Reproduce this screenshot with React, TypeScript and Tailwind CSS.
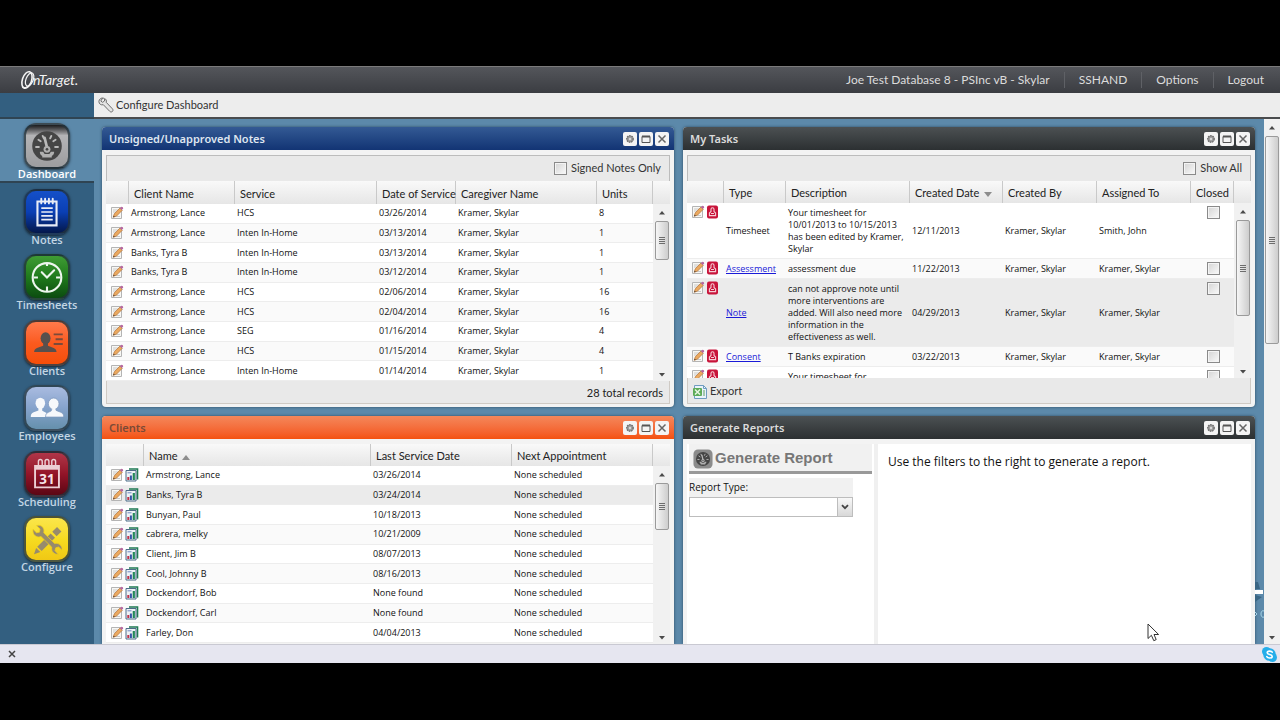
import { useState } from 'react';
import type { ReactNode } from 'react';
import clsx from 'clsx';

interface Note {
  client: string;
  service: string;
  date: string;
  units: number;
}

interface Task {
  type: string;
  linked: boolean;
  description: string;
  created: string;
  createdBy: string;
  assignedTo: string;
  height: string;
  active?: boolean;
}

interface Client {
  name: string;
  lastService: string;
}

const notes: Note[] = [
  { client: 'Armstrong, Lance', service: 'HCS', date: '03/26/2014', units: 8 },
  { client: 'Armstrong, Lance', service: 'Inten In-Home', date: '03/13/2014', units: 1 },
  { client: 'Banks, Tyra B', service: 'Inten In-Home', date: '03/13/2014', units: 1 },
  { client: 'Banks, Tyra B', service: 'Inten In-Home', date: '03/12/2014', units: 1 },
  { client: 'Armstrong, Lance', service: 'HCS', date: '02/06/2014', units: 16 },
  { client: 'Armstrong, Lance', service: 'HCS', date: '02/04/2014', units: 16 },
  { client: 'Armstrong, Lance', service: 'SEG', date: '01/16/2014', units: 4 },
  { client: 'Armstrong, Lance', service: 'HCS', date: '01/15/2014', units: 4 },
  { client: 'Armstrong, Lance', service: 'Inten In-Home', date: '01/14/2014', units: 1 },
];

const tasks: Task[] = [
  {
    type: 'Timesheet',
    linked: false,
    description: 'Your timesheet for 10/01/2013 to 10/15/2013 has been edited by Kramer, Skylar',
    created: '12/11/2013',
    createdBy: 'Kramer, Skylar',
    assignedTo: 'Smith, John',
    height: 'h-14',
  },
  {
    type: 'Assessment',
    linked: true,
    description: 'assessment due',
    created: '11/22/2013',
    createdBy: 'Kramer, Skylar',
    assignedTo: 'Kramer, Skylar',
    height: 'h-5',
  },
  {
    type: 'Note',
    linked: true,
    description:
      'can not approve note until more interventions are added. Will also need more information in the effectiveness as well.',
    created: '04/29/2013',
    createdBy: 'Kramer, Skylar',
    assignedTo: 'Kramer, Skylar',
    height: 'h-17',
    active: true,
  },
  {
    type: 'Consent',
    linked: true,
    description: 'T Banks expiration',
    created: '03/22/2013',
    createdBy: 'Kramer, Skylar',
    assignedTo: 'Kramer, Skylar',
    height: 'h-5',
  },
];

const clients: Client[] = [
  { name: 'Armstrong, Lance', lastService: '03/26/2014' },
  { name: 'Banks, Tyra B', lastService: '03/24/2014' },
  { name: 'Bunyan, Paul', lastService: '10/18/2013' },
  { name: 'cabrera, melky', lastService: '10/21/2009' },
  { name: 'Client, Jim B', lastService: '08/07/2013' },
  { name: 'Cool, Johnny B', lastService: '08/16/2013' },
  { name: 'Dockendorf, Bob', lastService: 'None found' },
  { name: 'Dockendorf, Carl', lastService: 'None found' },
  { name: 'Farley, Don', lastService: '04/04/2013' },
];

/* ---------- icons ---------- */

function Logo() {
  return (
    <svg width="64" height="22" viewBox="0 0 64 22" role="img" aria-label="OnTarget">
      <g fill="none" stroke="#f4f4f4">
        <ellipse cx="7" cy="11" rx="4.6" ry="8.6" transform="rotate(18 7 11)" strokeWidth="1.6" />
        <ellipse cx="9.6" cy="10.5" rx="3.6" ry="7" transform="rotate(22 9.6 10.5)" strokeWidth="1.2" />
        <path d="M2 17.5c2.4 2 6 1 8.4-3" strokeWidth="1.2" />
      </g>
      <text
        x="13"
        y="16"
        fill="#f4f4f4"
        className="font-['Lato',sans-serif] text-[14px] italic"
      >
        nTarget.
      </text>
    </svg>
  );
}

function WrenchIcon() {
  return (
    <svg width="16" height="16" viewBox="0 0 16 16" aria-hidden="true">
      <path
        d="M5.6 1.2C3.4.4 1 2 .9 4.4c-.1 2.6 2.2 4 4.4 3.3l6.4 6.6c.7.8 1.9.9 2.7.2.8-.8.7-1.9 0-2.7L8.2 5.3C8.8 3.6 8 2 6.600 1.500L6.500 4 4.600 5.300 3 4.200 3.100 2.500z"
        fill="#e4e4e4"
        stroke="#6d6d6d"
        strokeWidth="1"
        strokeLinejoin="round"
      />
    </svg>
  );
}

function EditIcon() {
  return (
    <svg width="14" height="14" viewBox="0 0 14 14" aria-hidden="true">
      <path d="M1.500 1.500h10v11h-10z" fill="#f7f7f4" stroke="#b4b4b4" />
      <path d="M3 4h5M3 6h3M3 10.500h7" stroke="#c9c9c9" />
      <path d="M3.200 11.300 4.300 7.800 10 2l2.300 2.200-5.800 5.900z" fill="#eba95f" stroke="#b87a42" strokeWidth=".8" />
      <path d="m9.800 2.200 1.400-1.300c.9-.5 2.300.8 1.900 1.700l-1.200 1.400z" fill="#b768a0" />
      <path d="m3.200 11.300.5-1.600 1.100 1.100z" fill="#333" />
    </svg>
  );
}

function ChartIcon() {
  return (
    <svg width="14" height="14" viewBox="0 0 14 14" aria-hidden="true">
      <path d="M4 1h8.500v10.500" fill="none" stroke="#1f7a54" strokeWidth="1.600" />
      <path d="M1 2.500h10v10.500H1z" fill="#eef3f6" stroke="#4d6c88" />
      <path d="M2.500 4.800h4" stroke="#7088c4" />
      <path d="M3.300 12V9" stroke="#c0324a" strokeWidth="2" />
      <path d="M5.900 12V7.500" stroke="#3554a8" strokeWidth="2" />
      <path d="M8.800 12V5" stroke="#23885a" strokeWidth="2.200" />
    </svg>
  );
}

function LockIcon() {
  return (
    <svg width="13" height="14" viewBox="0 0 13 14" aria-hidden="true">
      <rect x="1" y=".5" width="11" height="13" rx="2" fill="#c8143a" />
      <path d="M5 6.500V4.300c0-2 3-2 3 0v2.200l1.600 1.500v2.600H3.400V8z" fill="none" stroke="#f6cdd5" strokeWidth="1.100" />
      <path d="M5 8.500h3" stroke="#f6cdd5" />
    </svg>
  );
}

function ExcelIcon() {
  return (
    <svg width="16" height="16" viewBox="0 0 16 16" aria-hidden="true">
      <path d="M2.500 1.500h9l3 3v10h-12z" fill="#e9f3fb" stroke="#6f9cc0" />
      <path d="M11.500 1.500v3h3" fill="none" stroke="#6f9cc0" />
      <rect x="1" y="4" width="9" height="8" rx="1" fill="#5dab58" />
      <path d="m3 5.500 5 5m0-5-5 5" stroke="#e9f7e4" strokeWidth="1.500" />
      <path d="M11 7h2M11 9h2M11 11h2" stroke="#5f9e62" />
    </svg>
  );
}

function Gauge() {
  return (
    <>
      <circle cx="22" cy="22" r="15.500" fill="#454545" />
      <g stroke="#b9b9b9" strokeWidth="2" strokeLinecap="round">
        <path d="M10.500 23h3M30.500 23h3M13 15.500l2.400 1.600M31 15.500l-2.400 1.600M17.500 11.500l1.200 2.500M26.500 11.500l-1.200 2.500" />
        <path d="m19.500 13.500 2.500 10" strokeWidth="2.800" />
      </g>
      <circle cx="22" cy="25.500" r="3.600" fill="#b0b0b0" />
      <path d="M14.500 28h3.500l1.500 2.500h5l1.500-2.500h3.500c0 2.300-1 3.600-2.500 4.600V34H17v-1.400c-1.500-1-2.500-2.300-2.500-4.600z" fill="#b0b0b0" />
      <circle cx="22" cy="25.500" r="1.400" fill="#454545" />
    </>
  );
}

function NotesGlyph() {
  return (
    <g fill="none" stroke="#e8ecf6">
      <path d="M12 11h20v25H12z" strokeWidth="2.200" />
      <path d="M16 8v5M20 8v5M24 8v5M28 8v5" strokeWidth="2" strokeLinecap="round" />
      <path d="M16 18h12M16 22h12M16 26h12M16 30h12" strokeWidth="1.800" />
    </g>
  );
}

function ClockGlyph() {
  return (
    <g fill="none" stroke="#eef6ee" strokeWidth="2.200">
      <circle cx="22" cy="22.500" r="15" />
      <path d="m16.500 17 5.500 5.500 7.500-7.500" strokeLinecap="round" />
      <path d="M22 32v5M8 22.500h4.500M31.500 22.500H36M22 8v2.500" />
    </g>
  );
}

function ClientGlyph() {
  return (
    <>
      <ellipse cx="20.500" cy="17" rx="5.200" ry="6.200" fill="#57504d" />
      <path d="M18 21h5v4l6 2.200c1.800.8 3 2 3 4.300H8.500c0-2.300 1.200-3.500 3-4.300L18 25z" fill="#57504d" />
      <path d="M29 13h9.500M31 18h7.500M29 23h9.500" stroke="#7b4a3a" strokeWidth="2" />
    </>
  );
}

function PeopleGlyph() {
  return (
    <g fill="#f6f8fb">
      <ellipse cx="15" cy="17" rx="5" ry="5.800" />
      <path d="M13 21h4v4l5 2.500v4H5c0-3 .8-4 3-5l5-2z" />
      <g stroke="#7d97bd" strokeWidth=".8">
        <path d="M26.500 20h5v4.500l5 2c2.200 1 3 2 3 5h-19c0-3 .8-4 3-5l3-1.500z" />
        <ellipse cx="29" cy="17.500" rx="5.600" ry="6" />
      </g>
      <path d="M27.500 22h3v3h-3z" />
    </g>
  );
}

function CalendarGlyph() {
  return (
    <>
      <g fill="none" stroke="#eccfd4">
        <path d="M9.500 13.500h25v22.500h-25z" strokeWidth="2" />
        <path d="M9.500 15.500h25" strokeWidth="4" />
        <path d="M13 14V9c0-3 4-3 4 0v4M20 14V9c0-3 4-3 4 0v4M27 14V9c0-3 4-3 4 0v4" strokeWidth="1.500" />
      </g>
      <text x="22" y="32" textAnchor="middle" fill="#f6e4e7" className="font-['Noto_Sans',sans-serif] text-[14px] font-bold">
        31
      </text>
    </>
  );
}

function ToolsGlyph() {
  return (
    <g fill="#978b6c">
      <path d="m27.500 14.500 5-5 4.600 4.600-5 5zM25.800 16.200l4.600 4.600-14 13.800-4.600-4.600zM10.600 31.300l4.400 4.400-6.600 2.200z" />
      <path
        d="M16.500 8.600c-1.800-1-3.600-1.200-5.400-.6l3.600 3.600-.6 3.200-3.200.7-3.500-3.600c-.7 4 1.600 7.700 5.400 8 1.200.1 2-.1 2.900-.5L27 30.600c-1 4.500 2.500 8 7 7.300l-3.600-3.700.8-3 3-.8 3.500 3.500c.8-4.500-3-8.200-7.700-7.200L18.600 15.500c.7-2.600 0-5-2.100-6.900z"
        stroke="#f2cf18"
        strokeWidth=".8"
      />
    </g>
  );
}

/* ---------- sidebar ---------- */

const navItems: { label: string; tile: string; glyph: ReactNode }[] = [
  { label: 'Dashboard', tile: 'bg-linear-to-b from-[#1c1c1e] via-[#b4b4b6] via-25% to-[#9d9d9f]', glyph: <Gauge /> },
  { label: 'Notes', tile: 'bg-linear-to-b from-[#1550c8] via-[#0a3fb4] to-[#04184c]', glyph: <NotesGlyph /> },
  { label: 'Timesheets', tile: 'bg-linear-to-b from-[#3f9c34] via-[#1f7a1c] to-[#0c4c10]', glyph: <ClockGlyph /> },
  { label: 'Clients', tile: 'bg-linear-to-b from-[#ff7a4a] via-[#fb5a1e] to-[#f64e08]', glyph: <ClientGlyph /> },
  { label: 'Employees', tile: 'bg-linear-to-b from-[#a9bbe0] via-[#86a3cc] to-[#6590ac]', glyph: <PeopleGlyph /> },
  { label: 'Scheduling', tile: 'bg-linear-to-b from-[#b03548] via-[#931428] to-[#5c0714]', glyph: <CalendarGlyph /> },
  { label: 'Configure', tile: 'bg-linear-to-b from-[#fbe64a] via-[#f6dc20] to-[#f0c814]', glyph: <ToolsGlyph /> },
];

function Sidebar() {
  const [current, setCurrent] = useState('Dashboard');

  return (
    <nav className="w-[94px] shrink-0 bg-[#335f80]">
      <div className="h-[26px] border-b-2 border-[#2f4453]" />
      <ul className="grid h-[459px] grid-rows-7">
        {navItems.map((item) => (
          <li key={item.label}>
            <button
              type="button"
              onClick={() => setCurrent(item.label)}
              className={clsx(
                'flex w-full flex-col items-center pt-1',
                item.label === current && 'border-b-2 border-[#2f4453] bg-[#5c89aa] pb-0.5'
              )}
            >
              <span className={clsx('rounded-xl border-2 border-[#23343f]/80 shadow-sm shadow-black/50', item.tile)}>
                <svg width="42" height="42" viewBox="0 0 44 44" aria-hidden="true">
                  {item.glyph}
                </svg>
              </span>
              <span
                className={clsx(
                  "font-['Open_Sans',sans-serif] text-[11px] leading-[10px] font-semibold",
                  item.label === current ? 'text-white' : 'text-[#c3d6e4]'
                )}
              >
                {item.label}
              </span>
            </button>
          </li>
        ))}
      </ul>
    </nav>
  );
}

/* ---------- shared pieces ---------- */

function Checkbox({ id, label }: { id?: string; label?: string }) {
  return (
    <input
      id={id}
      type="checkbox"
      aria-label={label}
      className="size-[13px] shrink-0 appearance-none border border-[#8a8a8a] bg-linear-to-br from-[#d4d4d4] to-[#fafafa] shadow-[inset_0_0_0_1px_#f4f4f4] checked:bg-[#777]"
    />
  );
}

function ScrollBar({ thumb }: { thumb: string }) {
  return (
    <div className="flex min-h-0 flex-1 flex-col items-center bg-[#f1f1f1]" aria-hidden="true">
      <svg width="16" height="17" viewBox="0 0 16 17" className="shrink-0">
        <path d="M5 10.500 8 7l3 3.500z" fill="#4a4a4a" />
      </svg>
      <div
        className={clsx(
          'flex w-[14px] shrink-0 flex-col items-center justify-center gap-px rounded-xs border border-[#9a9a9a] bg-linear-to-r from-[#f6f6f6] to-[#cdcdcd]',
          thumb
        )}
      >
        <span className="h-px w-1.5 bg-[#6d6d6d]" />
        <span className="h-px w-1.5 bg-[#6d6d6d]" />
        <span className="h-px w-1.5 bg-[#6d6d6d]" />
        <span className="h-px w-1.5 bg-[#6d6d6d]" />
      </div>
      <div className="flex-1" />
      <svg width="16" height="14" viewBox="0 0 16 14" className="shrink-0">
        <path d="m5 6 3 3.500L11 6z" fill="#4a4a4a" />
      </svg>
    </div>
  );
}

const toolClass = 'flex size-[14px] items-center justify-center rounded-xs bg-[#f4f4f4]';

function PanelTools({ title }: { title: string }) {
  return (
    <div className="flex gap-0.5">
      <button type="button" className={toolClass} aria-label={`${title} settings`}>
        <svg width="10" height="10" viewBox="0 0 10 10">
          <circle cx="5" cy="5" r="3.200" fill="#9c9c9c" stroke="#6f6f6f" strokeWidth="1.400" strokeDasharray="1.600 .7" />
          <circle cx="5" cy="5" r="1.200" fill="#d8d8d8" />
        </svg>
      </button>
      <button type="button" className={toolClass} aria-label={`Maximize ${title}`}>
        <svg width="10" height="10" viewBox="0 0 10 10">
          <path d="M1 2.500h8v6H1z" fill="none" stroke="#555" />
          <path d="M1 2.500h8" stroke="#555" strokeWidth="2" />
        </svg>
      </button>
      <button type="button" className={toolClass} aria-label={`Close ${title}`}>
        <svg width="10" height="10" viewBox="0 0 10 10">
          <path d="m1.500 1.500 7 7m0-7-7 7" stroke="#666" strokeWidth="1.500" />
        </svg>
      </button>
    </div>
  );
}

interface PanelProps {
  title: string;
  headerClass: string;
  cut?: boolean;
  children: ReactNode;
}

function Panel({ title, headerClass, cut, children }: PanelProps) {
  return (
    <section
      className={clsx(
        'flex min-h-0 min-w-0 flex-col overflow-hidden rounded-t-sm bg-[#f3f3f3] shadow-[0_0_3px_#2c4a60]',
        !cut && 'rounded-b-sm'
      )}
    >
      <header className={clsx('flex h-[23px] shrink-0 items-center justify-between pt-px pr-[5px] pl-[7px]', headerClass)}>
        <h2 className="font-['Noto_Sans',sans-serif] text-[11px] font-semibold">{title}</h2>
        <PanelTools title={title} />
      </header>
      <div className={clsx('flex min-h-0 flex-1 flex-col px-1 pt-[5px]', !cut && 'pb-[3px]')}>{children}</div>
    </section>
  );
}

const barClass = 'flex shrink-0 items-center bg-[#e9e9e9] text-[#333]';
const thClass =
  'border-r border-[#c9c9c9] bg-linear-to-b from-[#f9f9f9] to-[#e6e6e6] pt-0.5 pl-[5px] text-left text-[11px] leading-4 font-normal text-[#222] whitespace-nowrap';
const tdClass = 'border-b border-[#ededed] pl-[2px] whitespace-nowrap';
const bodyClass = "font-['Open_Sans',sans-serif] text-[9px] leading-3 text-[#111]";

function ScrollColumn({ head, thumb }: { head: string; thumb: string }) {
  return (
    <div className="flex w-[17px] shrink-0 flex-col">
      <div className={clsx('shrink-0 bg-linear-to-b from-[#f9f9f9] to-[#e6e6e6]', head)} />
      <ScrollBar thumb={thumb} />
    </div>
  );
}

function SortArrow({ down }: { down?: boolean }) {
  return (
    <svg width="8" height="5" viewBox="0 0 8 5" className="ml-0.5 inline-block align-middle" aria-hidden="true">
      <path d={down ? 'M0 0h8L4 5z' : 'M0 5h8L4 0z'} fill="#8d8d8d" />
    </svg>
  );
}

/* ---------- panels ---------- */

function NotesPanel() {
  return (
    <Panel title="Unsigned/Unapproved Notes" headerClass="bg-linear-to-b from-[#345a94] to-[#123474] text-[#dfe6f0]">
      <div className={clsx(barClass, 'h-[26px] justify-end gap-1 border border-b-0 border-[#bcbcbc] pr-2')}>
        <Checkbox id="signed-only" />
        <label htmlFor="signed-only" className="text-[11px]">
          Signed Notes Only
        </label>
      </div>
      <div className="flex min-h-0 flex-1 overflow-hidden">
        <div className="min-w-0 flex-1">
          <table className="h-[200px] w-full table-fixed border-separate border-spacing-0 bg-white">
            <colgroup>
              <col className="w-[23px]" />
              <col className="w-[106px]" />
              <col className="w-[142px]" />
              <col className="w-[79px]" />
              <col className="w-[141px]" />
              <col className="w-[56px]" />
            </colgroup>
            <thead>
              <tr className="h-[23px]">
                <th className={thClass} aria-label="Edit" />
                <th className={thClass}>Client Name</th>
                <th className={thClass}>Service</th>
                <th className={thClass}>Date of Service</th>
                <th className={thClass}>Caregiver Name</th>
                <th className={thClass}>Units</th>
              </tr>
            </thead>
            <tbody className={bodyClass}>
              {notes.map((note, index) => (
                <tr key={index} className="even:bg-[#fafafa]">
                  <td className={tdClass}>
                    <button type="button" className="ml-0.5 block" aria-label={`Edit note for ${note.client}`}>
                      <EditIcon />
                    </button>
                  </td>
                  <td className={tdClass}>{note.client}</td>
                  <td className={tdClass}>{note.service}</td>
                  <td className={tdClass}>{note.date}</td>
                  <td className={tdClass}>Kramer, Skylar</td>
                  <td className={tdClass}>{note.units}</td>
                </tr>
              ))}
            </tbody>
          </table>
        </div>
        <ScrollColumn head="h-[23px]" thumb="h-[39px]" />
      </div>
      <div className={clsx(barClass, 'h-[23px] justify-end border border-t-0 border-[#cfcac4] pt-0.5 pr-1.5')}>
        <span className="text-[11px] text-[#222]">28 total records</span>
      </div>
    </Panel>
  );
}

function TasksPanel() {
  return (
    <Panel title="My Tasks" headerClass="bg-linear-to-b from-[#4c5153] to-[#2c3032] text-[#dcdcdc]">
      <div className={clsx(barClass, 'h-[26px] justify-end gap-1 border border-b-0 border-[#bcbcbc] pr-2')}>
        <Checkbox id="show-all" />
        <label htmlFor="show-all" className="text-[11px]">
          Show All
        </label>
      </div>
      <div className="flex min-h-0 flex-1 overflow-hidden">
        <div className="min-w-0 flex-1">
          <table className="w-full table-fixed border-separate border-spacing-0 bg-white">
            <colgroup>
              <col className="w-[37px]" />
              <col className="w-[62px]" />
              <col className="w-[124px]" />
              <col className="w-[93px]" />
              <col className="w-[94px]" />
              <col className="w-[94px]" />
              <col className="w-[43px]" />
            </colgroup>
            <thead>
              <tr className="h-[22px]">
                <th className={thClass} aria-label="Actions" />
                <th className={thClass}>Type</th>
                <th className={thClass}>Description</th>
                <th className={thClass}>
                  Created Date <SortArrow down />
                </th>
                <th className={thClass}>Created By</th>
                <th className={thClass}>Assigned To</th>
                <th className={thClass}>Closed</th>
              </tr>
            </thead>
            <tbody className={bodyClass}>
              {tasks.map((task, index) => (
                <tr key={index} className={clsx(task.height, task.active ? 'bg-[#ebebeb]' : 'even:bg-[#fafafa]')}>
                  <td className={clsx(tdClass, 'align-top')}>
                    <TaskActions type={task.type} />
                  </td>
                  <td className={tdClass}>
                    {task.linked ? (
                      <a href={`#${task.type.toLowerCase()}`} className="text-[#1a1ad8] underline">
                        {task.type}
                      </a>
                    ) : (
                      task.type
                    )}
                  </td>
                  <td className="border-b border-[#ededed] pr-1 pl-[2px] whitespace-normal">{task.description}</td>
                  <td className={tdClass}>{task.created}</td>
                  <td className={tdClass}>{task.createdBy}</td>
                  <td className={tdClass}>{task.assignedTo}</td>
                  <td className={clsx(tdClass, 'align-top')}>
                    <div className="flex justify-center pt-[3px]">
                      <Checkbox label={`${task.type} closed`} />
                    </div>
                  </td>
                </tr>
              ))}
              {/* next row, only its first line is scrolled into view */}
              <tr className="h-5">
                <td className="pl-[2px] align-top">
                  <TaskActions type="next task" />
                </td>
                <td />
                <td className="pt-1 pl-[2px] align-top whitespace-nowrap">Your timesheet for</td>
                <td />
                <td />
                <td />
                <td className="pl-[2px] align-top">
                  <div className="flex justify-center pt-[3px]">
                    <Checkbox label="Next task closed" />
                  </div>
                </td>
              </tr>
            </tbody>
          </table>
        </div>
        <ScrollColumn head="h-[22px]" thumb="h-[96px]" />
      </div>
      <div className={clsx(barClass, 'h-[26px] border border-t-0 border-[#cfcac4] pt-0.5 pl-1')}>
        <button type="button" className="flex items-center gap-0.5 text-[11px]">
          <ExcelIcon />
          Export
        </button>
      </div>
    </Panel>
  );
}

function TaskActions({ type }: { type: string }) {
  return (
    <div className="flex gap-px pt-0.5 pl-0.5">
      <button type="button" aria-label={`Edit ${type}`}>
        <EditIcon />
      </button>
      <button type="button" aria-label={`Lock ${type}`}>
        <LockIcon />
      </button>
    </div>
  );
}

function ClientsPanel() {
  return (
    <Panel title="Clients" cut headerClass="bg-linear-to-b from-[#f4875a] to-[#f4510c] text-[#7a4a36]">
      <div className="flex min-h-0 flex-1 overflow-hidden">
        <div className="min-w-0 flex-1">
          <table className="h-[199px] w-full table-fixed border-separate border-spacing-0 bg-white">
            <colgroup>
              <col className="w-[38px]" />
              <col className="w-[227px]" />
              <col className="w-[141px]" />
              <col className="w-[141px]" />
            </colgroup>
            <thead>
              <tr className="h-[22px]">
                <th className={thClass} aria-label="Actions" />
                <th className={thClass}>
                  Name <SortArrow />
                </th>
                <th className={thClass}>Last Service Date</th>
                <th className={thClass}>Next Appointment</th>
              </tr>
            </thead>
            <tbody className={bodyClass}>
              {clients.map((client, index) => (
                <tr key={client.name} className={index === 1 ? 'bg-[#ebebeb]' : 'even:bg-[#fafafa]'}>
                  <td className={tdClass}>
                    <div className="flex gap-px pl-0.5">
                      <button type="button" aria-label={`Edit ${client.name}`}>
                        <EditIcon />
                      </button>
                      <button type="button" aria-label={`Chart for ${client.name}`}>
                        <ChartIcon />
                      </button>
                    </div>
                  </td>
                  <td className={tdClass}>{client.name}</td>
                  <td className={tdClass}>{client.lastService}</td>
                  <td className={tdClass}>None scheduled</td>
                </tr>
              ))}
            </tbody>
          </table>
        </div>
        <ScrollColumn head="h-[22px]" thumb="h-[47px]" />
      </div>
    </Panel>
  );
}

function ReportsPanel() {
  return (
    <Panel title="Generate Reports" cut headerClass="bg-linear-to-b from-[#4c5153] to-[#2c3032] text-[#dcdcdc]">
      <div className="flex flex-1 bg-white">
        <div className="w-[191px] shrink-0 border-r-4 border-[#f0f0f0] pr-0.5 pl-0.5">
          <h3 className="flex h-[30px] items-center gap-0.5 border-b-3 border-[#999] bg-[#f1f1f1] pt-0.5 pl-1 font-['Liberation_Sans',sans-serif] text-[15px] font-bold text-[#777]">
            <svg width="20" height="20" viewBox="0 0 44 44" aria-hidden="true">
              <rect x="1" y="1" width="42" height="42" rx="10" fill="#8b8b8b" />
              <Gauge />
            </svg>
            Generate Report
          </h3>
          <div className="w-[164px] pt-1">
            <label
              htmlFor="report-type"
              className="flex h-[19px] items-center bg-[#f1f1f1] font-['Open_Sans',sans-serif] text-[10px] text-[#111]"
            >
              Report Type:
            </label>
            <div className="relative">
              <select
                id="report-type"
                className="block h-5 w-full appearance-none border border-[#bdbdbd] bg-white pl-1 text-[11px]"
                defaultValue=""
              >
                <option value="" />
              </select>
              <span className="pointer-events-none absolute inset-y-0 right-0 flex w-4 items-center justify-center border border-[#bdbdbd] bg-linear-to-b from-[#f8f8f8] to-[#d8d8d8]">
                <svg width="8" height="6" viewBox="0 0 8 6" aria-hidden="true">
                  <path d="m1 1.200 3 3 3-3" fill="none" stroke="#444" strokeWidth="1.800" />
                </svg>
              </span>
            </div>
          </div>
        </div>
        <p className="px-2.5 pt-2.5 font-['Open_Sans',sans-serif] text-xs text-[#111]">
          Use the filters to the right to generate a report.
        </p>
      </div>
    </Panel>
  );
}

/* ---------- page ---------- */

function TopBar() {
  const links = ['SSHAND', 'Options', 'Logout'];

  return (
    <header className="flex h-[27px] shrink-0 items-center border-t border-[#7b7b7b] bg-linear-to-b from-[#54565b] to-[#3b3d42] pr-0.5 pl-5 text-xs text-[#dcdcdc]">
      <Logo />
      <div className="flex-1" />
      <span className="pr-3.5">Joe Test Database 8 - PSInc vB - Skylar</span>
      {links.map((link) => (
        <a key={link} href={`#${link.toLowerCase()}`} className="border-l border-[#5f6166] px-3.5">
          {link}
        </a>
      ))}
    </header>
  );
}

export default function App() {
  return (
    <div className="relative flex h-screen flex-col overflow-hidden bg-black pt-[66px] pb-[57px] font-['Lato',sans-serif]">
      <TopBar />
      <div className="flex min-h-0 flex-1 overflow-hidden">
        <Sidebar />
        <div className="flex min-w-0 flex-1 flex-col">
          <div className="flex h-[26px] shrink-0 items-center border-b-2 border-[#4a4c4e] bg-[#ededed] pl-1">
            <button type="button" className="flex items-center gap-0.5 text-[11px] text-[#333]">
              <WrenchIcon />
              Configure Dashboard
            </button>
          </div>
          <div className="flex min-h-0 flex-1">
            <main className="relative grid min-w-0 flex-1 grid-cols-2 grid-rows-[280px_minmax(0,1fr)] gap-[9px] bg-[#5c89aa] pt-2 pr-[9px] pl-2">
              <NotesPanel />
              <TasksPanel />
              <ClientsPanel />
              <ReportsPanel />
              {/* edge of the desktop gadget tucked behind the panels */}
              <svg width="9" height="46" viewBox="0 0 9 46" className="absolute right-0 bottom-5" aria-hidden="true">
                <path d="M0 4h3l2 7H0zM0 17l7 2-7 5z" fill="#3a6684" />
                <path d="M0 12h8v4H0z" fill="#fff" />
                <path d="M9 33c-4-2-4 8 0 6M0 34l2 2-2 2" fill="none" stroke="#a7d5e8" />
              </svg>
            </main>
            <div className="flex w-4 shrink-0">
              <ScrollBar thumb="h-[208px]" />
            </div>
          </div>
        </div>
      </div>
      <footer className="flex h-[19px] shrink-0 items-center justify-between border-t border-[#c9c9d2] bg-[#e6e6f0] pr-0.5 pl-2">
        <button type="button" aria-label="Close bar">
          <svg width="8" height="8" viewBox="0 0 8 8">
            <path d="m1 1 6 6m0-6-6 6" stroke="#444" strokeWidth="1.500" />
          </svg>
        </button>
        <svg width="17" height="17" viewBox="0 0 17 17" role="img" aria-label="Skype">
          <circle cx="5.500" cy="5.500" r="4.500" fill="#25aeea" />
          <circle cx="11.500" cy="11.500" r="4.500" fill="#25aeea" />
          <circle cx="8.500" cy="8.500" r="6.300" fill="#25aeea" />
          <path
            d="M11.200 6.200C10.400 4.700 6.200 4.600 6.200 6.700c0 2.300 5 1.200 5 3.700 0 2.100-4.300 2.200-5.400.3"
            fill="none"
            stroke="#fff"
            strokeWidth="1.600"
            strokeLinecap="round"
          />
        </svg>
      </footer>
      <svg width="14" height="20" viewBox="0 0 14 20" className="absolute top-[623px] left-[1147px]" aria-hidden="true">
        <path d="M1 1v14.500l3.400-3.200 2.400 5.400 2.400-1.100L7 11.500h4.600z" fill="#fff" stroke="#333" />
      </svg>
    </div>
  );
}
